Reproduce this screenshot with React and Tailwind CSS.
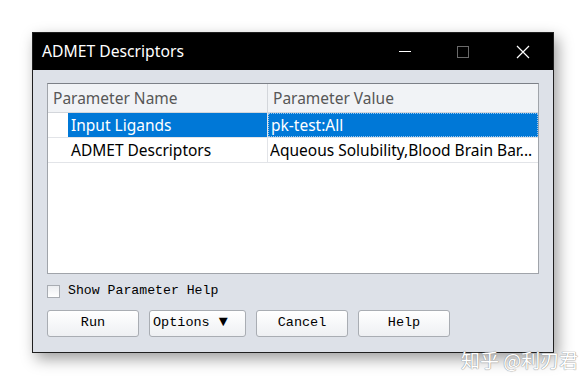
import React from "react";

const ui = { fontFamily: '"Noto Sans", "Open Sans", sans-serif' };
const mono = { fontFamily: '"Liberation Mono", "DejaVu Sans Mono", monospace' };

function Button({ children, className = "" }) {
  return (
    <button
      type="button"
      style={mono}
      className={`flex h-[27px] items-center justify-center rounded-[3px] border border-[#a9adb3] bg-[linear-gradient(#ffffff,#eef0f3)] text-[13.5px] text-black ${className}`}
    >
      {children}
    </button>
  );
}

function Row({ name, value, selected }) {
  return (
    <div className="flex h-[25px] border-b border-[#e2e4e8] text-[15.5px]" style={ui}>
      <div className="flex w-[220px] border-r border-[#e2e4e8] pl-[20px]">
        <div className={`flex flex-1 items-center pl-[3px] pt-[2px] ${selected ? "bg-[#0078d7] text-white" : "text-black"}`}>
          {name}
        </div>
      </div>
      <div
        className={`flex min-w-0 flex-1 items-center pl-[2px] pt-[2px] ${selected ? "border border-dotted border-[#9cc8ef] bg-[#0078d7] text-white" : "text-black"}`}
      >
        <span className="truncate">{value}</span>
      </div>
    </div>
  );
}

export default function App() {
  return (
    <div className="relative h-[385px] w-[586px] overflow-hidden bg-white">
      <div className="ml-[32px] mt-[32px] flex h-[321px] w-[522px] flex-col border border-[#1f1f1f] bg-[#dde1e8] shadow-[4px_6px_14px_rgba(0,0,0,0.38)]">
        <div className="flex h-[37px] items-center bg-black pl-[9px] text-[15.7px] text-white" style={ui}>
          <span className="flex-1">ADMET Descriptors</span>
          <div className="flex items-center">
            <div className="mr-[46px] h-[1px] w-[12px] bg-white" />
            <div className="mr-[47px] h-[12px] w-[12px] border border-[#6a6a6a]" />
            <svg width="14" height="14" viewBox="0 0 14 14" className="mr-[23px]">
              <path d="M1 1L13 13M13 1L1 13" stroke="white" strokeWidth="1.2" />
            </svg>
          </div>
        </div>
        <div className="flex flex-1 flex-col px-[14px] pt-[13px]">
          <div className="h-[191px] border border-[#a0a4aa] border-t-[#7c8087] bg-white">
            <div className="flex h-[29px] border-b border-[#d3d6db] bg-[#f1f3f6] text-[15.5px] text-[#575757]" style={ui}>
              <div className="flex w-[220px] items-center border-r border-[#d3d6db] pl-[5px] pt-[2px]">Parameter Name</div>
              <div className="flex flex-1 items-center pl-[5px] pt-[2px]">Parameter Value</div>
            </div>
            <Row name="Input Ligands" value="pk-test:All" selected />
            <Row name="ADMET Descriptors" value="Aqueous Solubility,Blood Brain Bar..." />
          </div>
          <div className="mt-[7px] flex h-[20px] items-center gap-[8px]">
            <div className="h-[13px] w-[13px] border border-[#a8acb2] bg-[linear-gradient(#eceef1,#ffffff)]" />
            <span style={mono} className="text-[13.2px] text-black">Show Parameter Help</span>
          </div>
          <div className="mt-[9px] flex gap-[10px]">
            <Button className="w-[92px]">Run</Button>
            <Button className="w-[97px] justify-start pl-[3px]">
              Options
              <span className="ml-[9px] text-[15px]">▼</span>
            </Button>
            <Button className="w-[92px]">Cancel</Button>
            <Button className="w-[92px]">Help</Button>
          </div>
        </div>
      </div>
      <div
        className="absolute left-[461px] top-[346px] text-[19px] text-white [text-shadow:0_0_1px_#8a8a8a,0_0_1px_#8a8a8a]"
        style={{ fontFamily: '"Noto Sans CJK SC", sans-serif' }}
      >
        知乎 @利刃君
      </div>
    </div>
  );
}
